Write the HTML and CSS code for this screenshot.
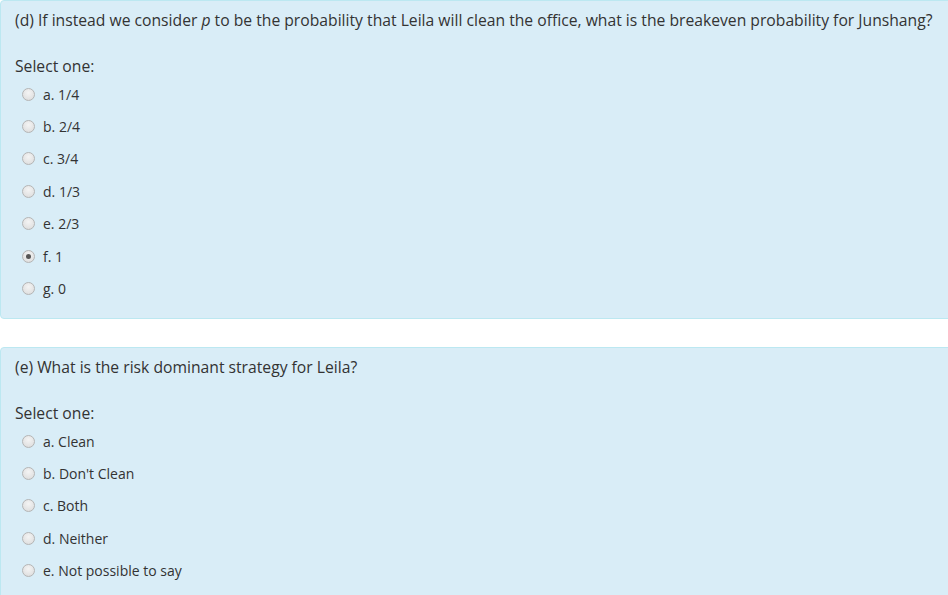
FILE: index.html
```html
<!DOCTYPE html>
<html>
<head>
<meta charset="utf-8">
<link rel="stylesheet" href="styles.css">
</head>
<body>
<div class="page">
  <div class="qbox">
    <div class="qtext">(d) If instead we consider <i>p</i> to be the probability that Leila will clean the office, what is the breakeven probability for Junshang?</div>
    <div class="prompt">Select one:</div>
    <div class="answers">
      <div class="opt"><span class="radio"></span><span>a. 1/4</span></div>
      <div class="opt"><span class="radio"></span><span>b. 2/4</span></div>
      <div class="opt"><span class="radio"></span><span>c. 3/4</span></div>
      <div class="opt"><span class="radio"></span><span>d. 1/3</span></div>
      <div class="opt"><span class="radio"></span><span>e. 2/3</span></div>
      <div class="opt"><span class="radio checked"></span><span>f. 1</span></div>
      <div class="opt"><span class="radio"></span><span>g. 0</span></div>
    </div>
  </div>
  <div class="qbox second">
    <div class="qtext">(e) What is the risk dominant strategy for Leila?</div>
    <div class="prompt">Select one:</div>
    <div class="answers">
      <div class="opt"><span class="radio"></span><span>a. Clean</span></div>
      <div class="opt"><span class="radio"></span><span>b. Don't Clean</span></div>
      <div class="opt"><span class="radio"></span><span>c. Both</span></div>
      <div class="opt"><span class="radio"></span><span>d. Neither</span></div>
      <div class="opt"><span class="radio"></span><span>e. Not possible to say</span></div>
    </div>
  </div>
</div>
</body>
</html>
```

FILE: styles.css
```css
html, body {
  margin: 0;
  padding: 0;
  background: #ffffff;
  overflow: hidden;
}
body {
  font-family: "Open Sans", "DejaVu Sans", sans-serif;
  color: #333333;
}
.page {
  width: 960px;
  height: 595px;
  overflow: hidden;
  display: flex;
  flex-direction: column;
  gap: 28px;
}
.qbox {
  background: #d9edf7;
  border: 1px solid #bce8f1;
  border-radius: 4px;
  padding: 9px 14px 14px 14px;
  height: 319px;
  box-sizing: border-box;
  flex: none;
}
.qbox.second {
  height: 300px;
}
.qtext {
  font-size: 15.7px;
  line-height: 20px;
}
.qtext i {
  font-style: italic;
}
.prompt {
  font-size: 15.7px;
  line-height: 20px;
  margin-top: 26px;
}
.answers {
  display: flex;
  flex-direction: column;
  margin-top: 2px;
}
.opt {
  display: flex;
  align-items: center;
  height: 32.4px;
  font-size: 14px;
  padding-left: 7px;
}
.radio {
  width: 13px;
  height: 13px;
  border-radius: 50%;
  border: 1px solid #b5b5b5;
  background: radial-gradient(circle at 50% 35%, #f4f4f4 0%, #e2e2e2 70%, #d2d2d2 100%);
  box-sizing: border-box;
  margin-right: 8px;
  flex: none;
  position: relative;
}
.radio.checked::after {
  content: "";
  position: absolute;
  left: 3px;
  top: 3px;
  width: 5px;
  height: 5px;
  border-radius: 50%;
  background: #555555;
}
```
